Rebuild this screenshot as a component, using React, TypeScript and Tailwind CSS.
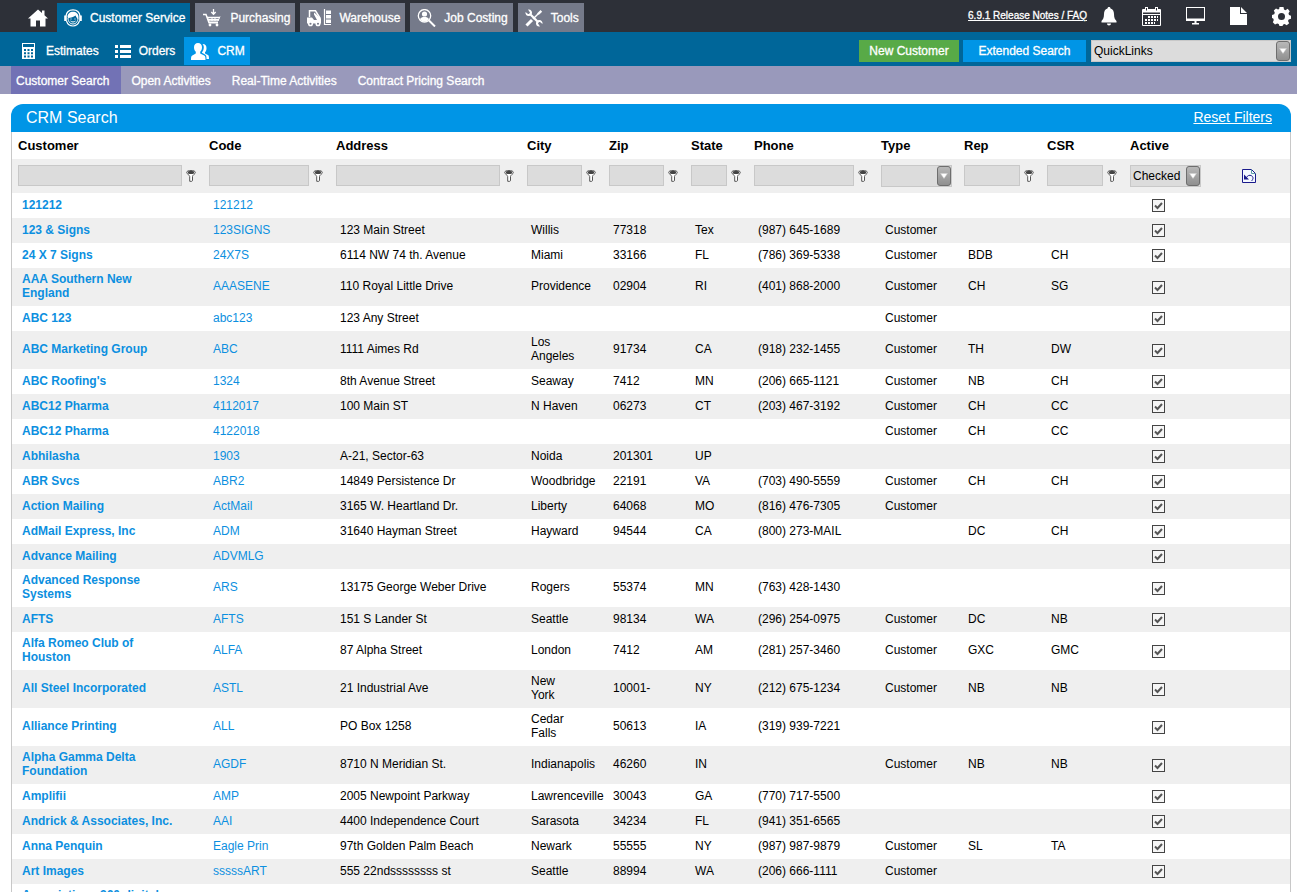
import type { ReactNode } from "react";
import clsx from "clsx";

type Row = {
    name: string;
    code: string;
    address?: string;
    city?: string;
    zip?: string;
    state?: string;
    phone?: string;
    type?: string;
    rep?: string;
    csr?: string;
};

const C = "Customer";

const rows: Row[] = [
    { name: "121212", code: "121212" },
    { name: "123 & Signs", code: "123SIGNS", address: "123 Main Street", city: "Willis", zip: "77318", state: "Tex", phone: "(987) 645-1689", type: C },
    { name: "24 X 7 Signs", code: "24X7S", address: "6114 NW 74 th. Avenue", city: "Miami", zip: "33166", state: "FL", phone: "(786) 369-5338", type: C, rep: "BDB", csr: "CH" },
    { name: "AAA Southern New England", code: "AAASENE", address: "110 Royal Little Drive", city: "Providence", zip: "02904", state: "RI", phone: "(401) 868-2000", type: C, rep: "CH", csr: "SG" },
    { name: "ABC 123", code: "abc123", address: "123 Any Street", type: C },
    { name: "ABC Marketing Group", code: "ABC", address: "1111 Aimes Rd", city: "Los Angeles", zip: "91734", state: "CA", phone: "(918) 232-1455", type: C, rep: "TH", csr: "DW" },
    { name: "ABC Roofing's", code: "1324", address: "8th Avenue Street", city: "Seaway", zip: "7412", state: "MN", phone: "(206) 665-1121", type: C, rep: "NB", csr: "CH" },
    { name: "ABC12 Pharma", code: "4112017", address: "100 Main ST", city: "N Haven", zip: "06273", state: "CT", phone: "(203) 467-3192", type: C, rep: "CH", csr: "CC" },
    { name: "ABC12 Pharma", code: "4122018", type: C, rep: "CH", csr: "CC" },
    { name: "Abhilasha", code: "1903", address: "A-21, Sector-63", city: "Noida", zip: "201301", state: "UP" },
    { name: "ABR Svcs", code: "ABR2", address: "14849 Persistence Dr", city: "Woodbridge", zip: "22191", state: "VA", phone: "(703) 490-5559", type: C, rep: "CH", csr: "CH" },
    { name: "Action Mailing", code: "ActMail", address: "3165 W. Heartland Dr.", city: "Liberty", zip: "64068", state: "MO", phone: "(816) 476-7305", type: C },
    { name: "AdMail Express, Inc", code: "ADM", address: "31640 Hayman Street", city: "Hayward", zip: "94544", state: "CA", phone: "(800) 273-MAIL", rep: "DC", csr: "CH" },
    { name: "Advance Mailing", code: "ADVMLG" },
    { name: "Advanced Response Systems", code: "ARS", address: "13175 George Weber Drive", city: "Rogers", zip: "55374", state: "MN", phone: "(763) 428-1430" },
    { name: "AFTS", code: "AFTS", address: "151 S Lander St", city: "Seattle", zip: "98134", state: "WA", phone: "(296) 254-0975", type: C, rep: "DC", csr: "NB" },
    { name: "Alfa Romeo Club of Houston", code: "ALFA", address: "87 Alpha Street", city: "London", zip: "7412", state: "AM", phone: "(281) 257-3460", type: C, rep: "GXC", csr: "GMC" },
    { name: "All Steel Incorporated", code: "ASTL", address: "21 Industrial Ave", city: "New\nYork", zip: "10001-", state: "NY", phone: "(212) 675-1234", type: C, rep: "NB", csr: "NB" },
    { name: "Alliance Printing", code: "ALL", address: "PO Box 1258", city: "Cedar\nFalls", zip: "50613", state: "IA", phone: "(319) 939-7221" },
    { name: "Alpha Gamma Delta Foundation", code: "AGDF", address: "8710 N Meridian St.", city: "Indianapolis", zip: "46260", state: "IN", type: C, rep: "NB", csr: "NB" },
    { name: "Amplifii", code: "AMP", address: "2005 Newpoint Parkway", city: "Lawrenceville", zip: "30043", state: "GA", phone: "(770) 717-5500" },
    { name: "Andrick & Associates, Inc.", code: "AAI", address: "4400 Independence Court", city: "Sarasota", zip: "34234", state: "FL", phone: "(941) 351-6565" },
    { name: "Anna Penquin", code: "Eagle Prin", address: "97th Golden Palm Beach", city: "Newark", zip: "55555", state: "NY", phone: "(987) 987-9879", type: C, rep: "SL", csr: "TA" },
    { name: "Art Images", code: "sssssART", address: "555 22ndssssssss st", city: "Seattle", zip: "88994", state: "WA", phone: "(206) 666-1111", type: C },
    { name: "Associations 360 digital\nmarketing", code: "" },
];

const columns = [
    { label: "Customer", width: "w-[191px]" },
    { label: "Code", width: "w-[127px]" },
    { label: "Address", width: "w-[191px]" },
    { label: "City", width: "w-[82px]" },
    { label: "Zip", width: "w-[82px]" },
    { label: "State", width: "w-[63px]" },
    { label: "Phone", width: "w-[127px]" },
    { label: "Type", width: "w-[83px]", options: [""] },
    { label: "Rep", width: "w-[83px]" },
    { label: "CSR", width: "w-[83px]" },
    { label: "Active", width: "w-[83px]", options: ["Checked", "Unchecked"] },
];

const HomeIcon = () => (
    <svg width="20" height="18" viewBox="0 0 20 18" fill="#fff">
        <path d="M10 0.500 14 4V1.500h2.500v4.800L20 9.500h-2.500V17.500h-5.500v-6H8v6H2.500V9.500H0z" />
    </svg>
);

const AgentIcon = () => (
    <svg width="18" height="18" viewBox="0 0 18 18" fill="none" stroke="#fff">
        <path d="M2 7C2.500 3 5.500.800 9 .800S15.500 3 16 7" strokeWidth="1.300" />
        <path d="M3.500 8C3.500 4.800 6 2.800 9 2.800s5.500 2 5.500 5.200c0 1-.300 1.500-.800 2-1-1-1.700-2.300-2.200-3.500C9.500 8 7 9 4 9z" fill="#fff" stroke="none" />
        <path d="M1.500 6.500v5.500M16.500 6.500v5.500" strokeWidth="2.600" />
        <path d="M4 9c0 3.500 2 6 5 6s5-2.500 5-6" />
        <path d="M2.500 12c1 3 3.500 5 6.500 5 2.800 0 5-1.500 6.500-5" strokeWidth="1.200" />
        <path d="M6.500 12c1.500 1.300 3.500 1.300 5 0M6.500 10h1M10.500 10h1" />
    </svg>
);

const CartIcon = () => (
    <svg width="20" height="18" viewBox="0 0 20 18" fill="none" stroke="#fff">
        <path d="M1 5.500h3l3 8.300h9" strokeWidth="1.500" />
        <path d="M5.500 8.500h12M6.500 10.800h10.500" strokeWidth="1.600" />
        <path d="M5 7.500 7 12h9l2-4.500M10 8v4M13 8v4" />
        <path d="M11.500 0v5M9.300 3l2.200 2.300L13.700 3" strokeWidth="1.300" />
        <circle cx="8" cy="16" r="1.400" fill="#fff" stroke="none" />
        <circle cx="15" cy="16" r="1.400" fill="#fff" stroke="none" />
    </svg>
);

const ForkliftIcon = () => (
    <svg width="24" height="18" viewBox="0 0 24 18" fill="none" stroke="#fff">
        <path d="M2.500 8V1.800h6L13 9v5" strokeWidth="1.500" />
        <path d="M0 8.500h5l2 2.500h3L7 5.500V3.500L9 5l5 5v4.500H0z" fill="#fff" stroke="none" />
        <circle cx="3.500" cy="14.800" r="1.800" fill="#757a8a" strokeWidth="1.500" />
        <circle cx="11" cy="14.800" r="1.800" fill="#757a8a" strokeWidth="1.500" />
        <path d="M17.500 0v15.500H24" strokeWidth="1.200" />
        <path d="M19 1.500h5V5h-5zM19 6h5v3.500h-5zM19 10.500h5V14h-5z" fill="#fff" stroke="none" />
    </svg>
);

const JobIcon = () => (
    <svg width="19" height="18" viewBox="0 0 19 18" fill="none" stroke="#fff">
        <circle cx="7.500" cy="6.800" r="6.200" strokeWidth="1.300" />
        <path d="m12 11.500 6 6" strokeWidth="2" />
        <circle cx="7.500" cy="5" r="2.600" fill="#fff" stroke="none" />
        <path d="M3 10.300C3.500 8.500 5.500 8 7.500 8s4 .500 4.500 2.300C11 12 9 12.500 7.500 12.500S4 12 3 10.300z" fill="#fff" stroke="none" />
    </svg>
);

const ToolsIcon = () => (
    <svg width="18" height="18" viewBox="0 0 18 18" fill="none" stroke="#fff">
        <path d="m4.500 4.500 9 9" strokeWidth="2.200" />
        <path d="M3 .500C5.500 0 7.500 2 7 4.500L4.500 7C2 7.500 0 5.500.500 3L3 5h1.500L5 3.500z" fill="#fff" stroke="none" />
        <path d="M15 17.500c-2.500.500-4.500-1.500-4-4l2.500-2.500c2.500-.500 4.500 1.500 4 4L15 13h-1.500L13 14.500z" fill="#fff" stroke="none" />
        <path d="M1.500 16.500 7 11" strokeWidth="3" />
        <path d="m8 10 5-5" strokeWidth="1.500" />
        <path d="m12 4.500 3.500-3.500 1.700 1.700L13.700 6z" fill="#fff" stroke="none" />
    </svg>
);

const CalculatorIcon = () => (
    <svg width="13" height="16" viewBox="0 0 13 16" fill="#fff">
        <path
            fillRule="evenodd"
            d="M0 0h13v16H0zM1 1v3h11V1zM2 6v2h2V6zM5.500 6v2h2V6zM9 6v2h2V6zM2 9.200v2h2v-2zM5.500 9.200v2h2v-2zM9 9.200v2h2v-2zM2 12.400v2h2v-2zM5.500 12.400v2h2v-2zM9 12.400v2h2v-2z"
        />
    </svg>
);

const ListIcon = () => (
    <svg width="16" height="13" viewBox="0 0 16 13" fill="#fff">
        <path d="M0 0h3v3H0zM5 0h11v3H5zM0 5h3v3H0zM5 5h11v3H5zM0 10h3v3H0zM5 10h11v3H5z" />
    </svg>
);

const PeopleIcon = () => (
    <svg width="18" height="17" viewBox="0 0 18 17" fill="#fff">
        <path d="M7 0c2.500 0 4 1.800 4 4.300 0 2-.800 3.500-1.800 4.500v1.700l4 2c1 .500 1.300 1.500 1.300 4.500H0c0-3 .300-4 1.300-4.500l3.500-2V8.800C3.800 7.800 3 6.300 3 4.300 3 1.800 4.500 0 7 0z" />
        <path d="M11.500 1c3 0 4 2 4 4.200 0 1.700-.500 3-1.500 4v1.300l3 1.500c.800.500 1 1.500 1 4h-2.500c0-3-.500-4-1.500-4.500l-3-1.700V9.300c1-1 1.800-2.800 1.800-5 0-1.300-.500-2.500-1.300-3.300z" />
    </svg>
);

const BellIcon = () => (
    <svg width="16" height="19" viewBox="0 0 16 19" fill="#fff">
        <path d="M8 0c1 0 1.500.700 1.500 1.500C12 2.300 13 4.500 13 7c0 4 1 5.500 2.500 7v1.500H.500V14C2 12.500 3 11 3 7c0-2.500 1-4.700 3.500-5.500C6.500.700 7 0 8 0zM6 16.500h4c0 1-.800 2-2 2s-2-1-2-2z" />
    </svg>
);

const CalendarIcon = () => (
    <svg width="19" height="19" viewBox="0 0 19 19" fill="none" stroke="#fff">
        <path d="M.500 2.500h18v16H.500zM.500 7.500h18" />
        <path d="M1 3h17v2.500H1z" fill="#fff" stroke="none" />
        <path d="M4.500 0v4M14.500 0v4" strokeWidth="3" />
        <path d="M4.500 1v2.500M14.500 1v2.500" stroke="#2d3038" />
        <path d="M6 10h10M3 13h13M3 16h10" strokeWidth="2" strokeDasharray="2 1" />
    </svg>
);

const MonitorIcon = () => (
    <svg width="19" height="18" viewBox="0 0 19 18" fill="#fff">
        <path fillRule="evenodd" d="M0 0h19v14H0zM1 1v10.500h17V1z" />
        <path d="M8.500 14h2v2.500h-2zM6 16h7v1.500H6z" />
    </svg>
);

const FileIcon = () => (
    <svg width="17" height="18" viewBox="0 0 17 18" fill="#fff">
        <path d="M0 0h10v7h7v11H0zM11 0l6 6h-6z" />
    </svg>
);

const GearIcon = () => (
    <svg width="19" height="19" viewBox="0 0 19 19" fill="#fff">
        <path
            fillRule="evenodd"
            d="M7.500 0h4l.500 2.500 1.500.700L15.700 1.800l2 2.500-1.200 2L17 8l2 .700v3l-2.300.800-.700 1.500 1.200 2.200-2.500 2-2-1.200-1.500.500-.700 1.500h-3l-.800-2-1.500-.600-2.200 1-2.200-2.200 1-2.200-.600-1.500L0 11V8l2.200-.700.600-1.500-1-2.200L4 1.600l2 1 1.200-.500zM9.500 6a3.500 3.500 0 1 0 0 7 3.500 3.500 0 0 0 0-7z"
        />
    </svg>
);

const FilterIcon = () => (
    <svg width="10" height="12" viewBox="0 0 10 12" fill="none" stroke="#555">
        <path d="M.700 2.500C.700 1 2.500.600 5 .600s4.300.400 4.300 1.900C9.300 4 6.500 5 6.500 6.500v4.200l-.700.600H3.700V6.500C3.700 5 .700 4 .700 2.500z" fill="#fff" />
        <ellipse cx="5" cy="2.400" rx="3.200" ry="1.600" fill="#444" stroke="none" />
    </svg>
);

const ResetIcon = () => (
    <svg width="14" height="14" viewBox="0 0 14 14" fill="none" stroke="#1a1a8c">
        <path d="M.500.500h9l4 4v9H.500z" fill="#f4f8ff" />
        <path d="M9.500.500v4h4" stroke="#5fa0a8" />
        <path d="M2 5.500v5h5z" fill="#1a1a8c" stroke="none" />
        <path d="M4.500 8.500c1-2 3-2.800 5-1.800 2 1.300 2 3.300 0 5.300" />
    </svg>
);

const modules = [
    { label: "Customer Service", icon: <AgentIcon />, active: true },
    { label: "Purchasing", icon: <CartIcon /> },
    { label: "Warehouse", icon: <ForkliftIcon /> },
    { label: "Job Costing", icon: <JobIcon /> },
    { label: "Tools", icon: <ToolsIcon /> },
];

const shortcuts = [
    { label: "Notifications", icon: <BellIcon /> },
    { label: "Calendar", icon: <CalendarIcon /> },
    { label: "Dashboard", icon: <MonitorIcon /> },
    { label: "Documents", icon: <FileIcon /> },
    { label: "Settings", icon: <GearIcon /> },
];

interface ISelect {
    label: string;
    options: string[];
    className?: string;
}

const Select = ({ label, options, className }: ISelect) => (
    <div className={clsx("relative", className)}>
        <select
            aria-label={label}
            className="block h-[22px] w-full appearance-none border border-[#c8c8c8] bg-[#dcdcdc] pl-[2px] pr-4 text-xs text-black"
        >
            {options.map((o) => (
                <option key={o}>{o}</option>
            ))}
        </select>
        <span className="pointer-events-none absolute inset-y-px right-px flex w-[14px] items-center justify-center rounded-[3px] border border-[#6e6e6e] bg-linear-to-b from-[#b8b8b8] to-[#909090]">
            <svg width="8" height="6" viewBox="0 0 8 6">
                <path d="M.500.500h7L4 5.500z" fill="#fff" stroke="#ccc" strokeWidth=".500" />
            </svg>
        </span>
    </div>
);

const TextCell = ({ children, wide }: { children?: ReactNode; wide?: boolean }) => (
    <td className={clsx("whitespace-pre-line pt-1 pb-[6px] pl-[10px]", wide ? "pr-6" : "pr-[10px]")}>{children}</td>
);

export default function App() {
    return (
        <div className="h-screen overflow-hidden bg-white font-['Liberation_Sans',Arial,sans-serif] text-xs text-black">
            <header className="flex h-8 items-end bg-[#2d3038] pl-7 text-white">
                <a href="#" aria-label="Home" className="mr-[9px] flex h-[29px] items-center">
                    <HomeIcon />
                </a>
                <nav className="flex gap-[5px]">
                    {modules.map((m) => (
                        <a
                            key={m.label}
                            href="#"
                            className={clsx(
                                "flex h-[29px] items-center gap-2 whitespace-nowrap pl-[7px] pr-[5px] text-xs [-webkit-text-stroke:0.3px]",
                                m.active ? "bg-[#006699]" : "bg-[#757a8a]"
                            )}
                        >
                            {m.icon}
                            {m.label}
                        </a>
                    ))}
                </nav>
                <div className="ml-auto flex h-8 items-center pr-[6px]">
                    <a href="#" className="mr-[14px] text-[10px] underline [-webkit-text-stroke:0.3px]">
                        6.9.1 Release Notes / FAQ
                    </a>
                    <div className="flex items-center gap-[25px]">
                        {shortcuts.map((s) => (
                            <a key={s.label} href="#" aria-label={s.label}>
                                {s.icon}
                            </a>
                        ))}
                    </div>
                </div>
            </header>

            <div className="flex h-[34px] items-center bg-[#006699] pt-1 pl-[22px] pr-[6px] text-white">
                <nav className="flex items-center [-webkit-text-stroke:0.3px]">
                    <a href="#" className="mr-4 flex items-center gap-[11px]">
                        <CalculatorIcon />
                        Estimates
                    </a>
                    <a href="#" className="mr-[9px] flex items-center gap-2">
                        <ListIcon />
                        Orders
                    </a>
                    <a href="#" className="flex h-7 items-center gap-2 bg-[#0095e6] pl-[7px] pr-[5px]">
                        <PeopleIcon />
                        CRM
                    </a>
                </nav>
                <div className="ml-auto flex items-center">
                    <button className="mr-1 h-[22px] w-[100px] bg-[#58aa47] [-webkit-text-stroke:0.3px]">New Customer</button>
                    <button className="mr-[5px] h-[22px] w-[123px] bg-[#0095e6] [-webkit-text-stroke:0.3px]">Extended Search</button>
                    <Select label="QuickLinks" options={["QuickLinks"]} className="w-[200px]" />
                </div>
            </div>

            <nav className="flex h-7 items-center bg-[#9999bb] pl-[11px] text-white [-webkit-text-stroke:0.3px]">
                <a href="#" className="bg-[#7272b5] pt-[7px] pb-[5px] pl-[5px] pr-3">
                    Customer Search
                </a>
                <a href="#" className="ml-[10px] pt-[2px]">Open Activities</a>
                <a href="#" className="ml-[21px] pt-[2px]">Real-Time Activities</a>
                <a href="#" className="ml-[21px] pt-[2px]">Contract Pricing Search</a>
            </nav>

            <main className="mt-[10px] ml-[11px] mr-[6px]">
                <div className="flex h-7 items-center justify-between rounded-t-xl bg-[#0095e6] pl-[15px] pr-[19px] text-white">
                    <h1 className="text-base">CRM Search</h1>
                    <a href="#" className="pb-[2px] text-sm underline">
                        Reset Filters
                    </a>
                </div>
                <div className="border-x border-[#c8c8c8]">
                    <table className="w-full table-fixed border-collapse leading-[14px]">
                        <colgroup>
                            {columns.map((c) => (
                                <col key={c.label} className={c.width} />
                            ))}
                            <col />
                        </colgroup>
                        <thead>
                            <tr className="h-[27px]">
                                {columns.map((c) => (
                                    <th key={c.label} className="pl-[6px] text-left text-[13px] font-bold">
                                        {c.label}
                                    </th>
                                ))}
                                <th />
                            </tr>
                            <tr className="h-[34px] bg-[#efefef]">
                                {columns.map((c) => (
                                    <td key={c.label} className={clsx("pt-[6px] pl-[6px] align-top", c.options ? "pr-[6px]" : "pr-[7px]")}>
                                        {c.options ? (
                                            <Select label={c.label} options={c.options} />
                                        ) : (
                                            <div className="flex items-center gap-1">
                                                <input
                                                    aria-label={c.label}
                                                    className="h-[21px] min-w-0 flex-1 border border-[#c8c8c8] bg-[#dcdcdc] px-1"
                                                />
                                                <button aria-label={`Filter ${c.label}`} className="w-[10px]">
                                                    <FilterIcon />
                                                </button>
                                            </div>
                                        )}
                                    </td>
                                ))}
                                <td className="text-center">
                                    <button aria-label="Reset" className="align-middle">
                                        <ResetIcon />
                                    </button>
                                </td>
                            </tr>
                        </thead>
                        <tbody>
                            {rows.map((r, i) => (
                                <tr key={i} className="h-[25px] even:bg-[#efefef]">
                                    <TextCell wide>
                                        <a href="#" className="font-bold text-[#0c8fe0]">
                                            {r.name}
                                        </a>
                                    </TextCell>
                                    <TextCell>
                                        <a href="#" className="text-[#0c8fe0]">
                                            {r.code}
                                        </a>
                                    </TextCell>
                                    <TextCell>{r.address}</TextCell>
                                    <TextCell>{r.city}</TextCell>
                                    <TextCell>{r.zip}</TextCell>
                                    <TextCell>{r.state}</TextCell>
                                    <TextCell>{r.phone}</TextCell>
                                    <TextCell>{r.type}</TextCell>
                                    <TextCell>{r.rep}</TextCell>
                                    <TextCell>{r.csr}</TextCell>
                                    <td className="pl-7">
                                        <div className="grid w-[13px]">
                                            <input
                                                type="checkbox"
                                                aria-label={`${r.name} active`}
                                                defaultChecked
                                                className="peer col-start-1 row-start-1 size-[13px] appearance-none border border-[#444] bg-[#f6f6f6]"
                                            />
                                            <svg
                                                width="13"
                                                height="13"
                                                viewBox="0 0 13 13"
                                                fill="none"
                                                stroke="#555"
                                                strokeWidth="2"
                                                className="pointer-events-none invisible col-start-1 row-start-1 peer-checked:visible"
                                            >
                                                <path d="m3 6.500 2.500 2.500L10 4" />
                                            </svg>
                                        </div>
                                    </td>
                                    <td />
                                </tr>
                            ))}
                        </tbody>
                    </table>
                </div>
            </main>
        </div>
    );
}
